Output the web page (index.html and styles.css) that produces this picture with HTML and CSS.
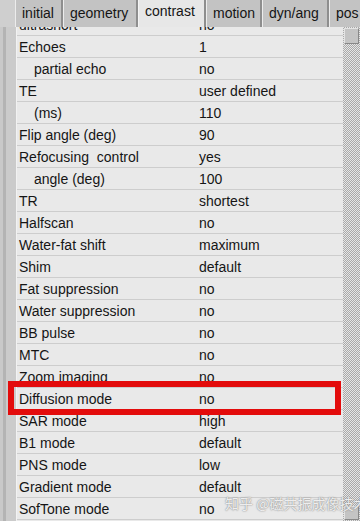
FILE: index.html
```html
<!DOCTYPE html>
<html>
<head>
<meta charset="utf-8">
<link rel="stylesheet" href="styles.css">
</head>
<body>
<div class="window">
  <div class="tabs">
    <div class="tab t-initial">initial</div>
    <div class="tab t-geometry">geometry</div>
    <div class="tab t-contrast active">contrast</div>
    <div class="tab t-motion">motion</div>
    <div class="tab t-dyn">dyn/ang</div>
    <div class="tab t-pos">pos</div>
  </div>
  <div class="main">
    <div class="strip"></div>
    <div class="table">
      <div class="list">
        <div class="row"><span class="lbl">ultrashort</span><span class="val">no</span></div>
        <div class="row"><span class="lbl">Echoes</span><span class="val">1</span></div>
        <div class="row"><span class="lbl ind">partial echo</span><span class="val">no</span></div>
        <div class="row"><span class="lbl">TE</span><span class="val">user defined</span></div>
        <div class="row"><span class="lbl ind">(ms)</span><span class="val">110</span></div>
        <div class="row"><span class="lbl">Flip angle (deg)</span><span class="val">90</span></div>
        <div class="row"><span class="lbl">Refocusing&nbsp; control</span><span class="val">yes</span></div>
        <div class="row"><span class="lbl ind">angle (deg)</span><span class="val">100</span></div>
        <div class="row"><span class="lbl">TR</span><span class="val">shortest</span></div>
        <div class="row"><span class="lbl">Halfscan</span><span class="val">no</span></div>
        <div class="row"><span class="lbl">Water-fat shift</span><span class="val">maximum</span></div>
        <div class="row"><span class="lbl">Shim</span><span class="val">default</span></div>
        <div class="row"><span class="lbl">Fat suppression</span><span class="val">no</span></div>
        <div class="row"><span class="lbl">Water suppression</span><span class="val">no</span></div>
        <div class="row"><span class="lbl">BB pulse</span><span class="val">no</span></div>
        <div class="row"><span class="lbl">MTC</span><span class="val">no</span></div>
        <div class="row"><span class="lbl">Zoom imaging</span><span class="val">no</span></div>
        <div class="row"><span class="lbl">Diffusion mode</span><span class="val">no</span></div>
        <div class="row"><span class="lbl">SAR mode</span><span class="val">high</span></div>
        <div class="row"><span class="lbl">B1 mode</span><span class="val">default</span></div>
        <div class="row"><span class="lbl">PNS mode</span><span class="val">low</span></div>
        <div class="row"><span class="lbl">Gradient mode</span><span class="val">default</span></div>
        <div class="row"><span class="lbl">SofTone mode</span><span class="val">no</span></div>
      </div>
    </div>
    <div class="scrollbar">
      <div class="sb-btn"></div>
      <div class="sb-track"></div>
      <div class="sb-btn sb-bottom"></div>
    </div>
    <div class="highlight"></div>
    <div class="watermark">知乎 @磁共振成像技术</div>
  </div>
</div>
</body>
</html>
```

FILE: styles.css
```css
html, body {
  margin: 0;
  padding: 0;
}
body {
  width: 360px;
  height: 521px;
  overflow: hidden;
  background: #c6c6c6;
  font-family: "Liberation Sans", Arial, sans-serif;
  font-size: 14px;
  color: #151515;
}
.window {
  display: flex;
  flex-direction: column;
  height: 521px;
}
.tabs {
  display: flex;
  height: 27px;
  padding-left: 15px;
  background: #cfcfcf;
  flex-shrink: 0;
  overflow: hidden;
}
.tab {
  box-sizing: border-box;
  height: 27px;
  padding: 4px 0 0 6px;
  line-height: 18px;
  background: #c3c3c3;
  border-left: 1px solid #ececec;
  border-right: 2px solid #8e8e8e;
  white-space: nowrap;
  flex-shrink: 0;
}
.t-initial { width: 48px; }
.t-geometry { width: 75px; }
.t-contrast { width: 68px; }
.t-motion { width: 56px; }
.t-dyn { width: 67px; }
.t-pos { width: 40px; border-right: none; }
.tab.active {
  background: #e7e7e7;
  padding-top: 2px;
  border-left-color: #f4f4f4;
}
.main {
  position: relative;
  display: flex;
  flex: 1;
  min-height: 0;
}
.strip {
  width: 16px;
  flex-shrink: 0;
  background: linear-gradient(to right, #c9c9c9 0, #c9c9c9 3px, #b4b4b4 3px, #b4b4b4 6px, #cbcbcb 6px);
}
.table {
  width: 327px;
  flex-shrink: 0;
  overflow: hidden;
  background: #e9e9e9;
  border-left: 1px solid #f2f2f2;
  box-sizing: border-box;
}
.list {
  margin-top: -13px;
}
.row {
  display: flex;
  height: 22px;
  box-sizing: border-box;
  border-bottom: 1px solid #cdcdcd;
  align-items: center;
  white-space: nowrap;
}
.lbl {
  width: 180px;
  padding-left: 2px;
  flex-shrink: 0;
}
.lbl.ind {
  padding-left: 17px;
  width: 165px;
}
.val {
  flex: 1;
}
.scrollbar {
  flex: 1;
  display: flex;
  flex-direction: column;
  background-color: #e2e2e2;
  background-image: repeating-conic-gradient(#a9a9a9 0 25%, #e6e6e6 0 50%);
  background-size: 2px 2px;
}
.sb-btn {
  height: 14px;
  margin: 1px 1px 0 1px;
  background: #c4c4c4;
  border-top: 1px solid #e4e4e4;
  border-left: 1px solid #e4e4e4;
  border-right: 1px solid #888;
  border-bottom: 1px solid #888;
}
.sb-track {
  flex: 1;
}
.sb-bottom {
  margin: 0 1px 1px 1px;
  height: 12px;
}
.highlight {
  position: absolute;
  left: 8px;
  top: 354px;
  width: 333px;
  height: 34px;
  box-sizing: border-box;
  border: 6px solid #e30c0c;
}
.watermark {
  position: absolute;
  left: 225px;
  top: 466px;
  font-family: "Noto Sans CJK SC", sans-serif;
  font-size: 14px;
  color: rgba(255, 255, 255, 0.85);
  text-shadow: 0 0 1px #8a8a8a, 0 0 2px #9a9a9a;
  white-space: nowrap;
}
```
